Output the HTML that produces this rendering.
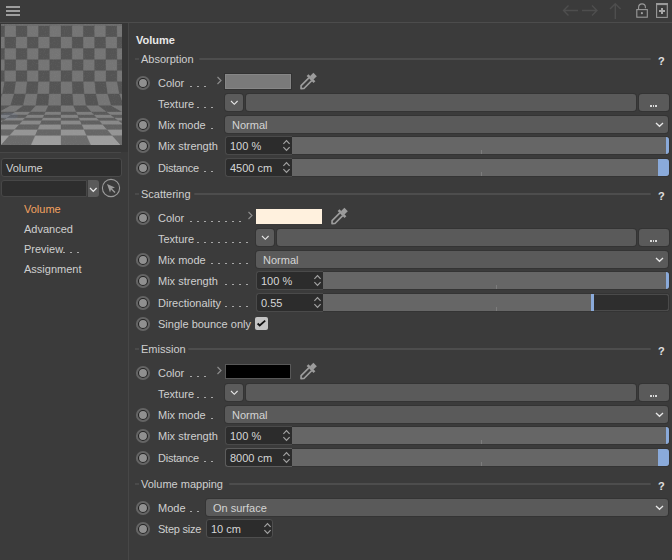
<!DOCTYPE html><html><head><meta charset="utf-8"><style>
html,body{margin:0;padding:0;width:672px;height:560px;overflow:hidden;background:#3b3b3b;}
.r{position:absolute;}
.t{position:absolute;font-family:"Liberation Sans",sans-serif;font-size:11px;line-height:13px;white-space:nowrap;}
svg.r{overflow:visible}
</style></head><body>
<div class="r" style="left:6px;top:6px;width:14px;height:2px;background:#9e9e9e;"></div>
<div class="r" style="left:6px;top:10px;width:14px;height:2px;background:#9e9e9e;"></div>
<div class="r" style="left:6px;top:14px;width:14px;height:2px;background:#9e9e9e;"></div>
<div class="r" style="left:0px;top:22px;width:672px;height:1px;background:#4c4c4c;"></div>
<svg class="r" style="left:560px;top:2px" width="112" height="18" viewBox="0 0 112 18"><g fill="none" stroke="#4e4e4e" stroke-width="1.4"><path d="M3.5 8.5 H18 M8.5 3.5 L3.5 8.5 L8.5 13.5"/><path d="M22 8.5 H37 M32 3.5 L37 8.5 L32 13.5"/><path d="M55.3 1.8 V17 M50 7 L55.3 1.8 L60.6 7"/></g><g fill="none" stroke="#9a9a9a" stroke-width="1.1"><path d="M78.6 7.3 V5.3 A3.4 3.4 0 0 1 85.4 5.3 V6.2"/><rect x="76.8" y="7.6" width="10.5" height="7.6"/><rect x="96.6" y="1.6" width="10.7" height="13.8"/></g><rect x="96.1" y="1.1" width="11.7" height="2" fill="#9a9a9a"/><circle cx="81.9" cy="11.2" r="1.1" fill="#a0a0a0"/><path d="M99 9.1 H105 M102 6.1 V12" stroke="#a8a8a8" stroke-width="2" fill="none"/></svg>
<div class="r" style="left:0px;top:23px;width:128px;height:129px;background:#363636;"></div>
<div class="r" style="left:128px;top:23px;width:1px;height:537px;background:#474747;"></div>
<svg class="r" style="left:0px;top:23px" width="122" height="123" viewBox="0 23 122 123"><defs><clipPath id="pc"><rect x="1" y="24" width="121" height="121"/></clipPath><filter id="nz" x="0" y="0" width="100%" height="100%"><feTurbulence type="fractalNoise" baseFrequency="0.9" numOctaves="1" seed="3"/><feColorMatrix type="matrix" values="0 0 0 0 0.5  0 0 0 0 0.5  0 0 0 0 0.5  1 0 0 0 -0.5"/></filter></defs><g clip-path="url(#pc)"><rect x="0" y="23" width="122" height="123" fill="#656565"/><path d="M-73.50 13.00L-62.29 13.00L-62.37 25.90L-73.59 25.90Z" fill="#6c6c6c" stroke="#6c6c6c" stroke-width="0.3"/><path d="M-62.29 13.00L-51.08 13.00L-51.16 25.90L-62.37 25.90Z" fill="#6c6c6c" stroke="#6c6c6c" stroke-width="0.3"/><path d="M-51.08 13.00L-39.87 13.00L-39.94 25.90L-51.16 25.90Z" fill="#6c6c6c" stroke="#6c6c6c" stroke-width="0.3"/><path d="M-39.87 13.00L-28.66 13.00L-28.73 25.90L-39.94 25.90Z" fill="#6c6c6c" stroke="#6c6c6c" stroke-width="0.3"/><path d="M-28.66 13.00L-17.46 13.00L-17.51 25.90L-28.73 25.90Z" fill="#6c6c6c" stroke="#6c6c6c" stroke-width="0.3"/><path d="M-17.46 13.00L-6.25 13.00L-6.29 25.90L-17.51 25.90Z" fill="#6c6c6c" stroke="#6c6c6c" stroke-width="0.3"/><path d="M-6.25 13.00L4.96 13.00L4.92 25.90L-6.29 25.90Z" fill="#6c6c6c" stroke="#6c6c6c" stroke-width="0.3"/><path d="M4.96 13.00L16.17 13.00L16.14 25.90L4.92 25.90Z" fill="#6c6c6c" stroke="#6c6c6c" stroke-width="0.3"/><path d="M16.17 13.00L27.38 13.00L27.35 25.90L16.14 25.90Z" fill="#6c6c6c" stroke="#6c6c6c" stroke-width="0.3"/><path d="M27.38 13.00L38.58 13.00L38.57 25.90L27.35 25.90Z" fill="#6c6c6c" stroke="#6c6c6c" stroke-width="0.3"/><path d="M38.58 13.00L49.79 13.00L49.78 25.90L38.57 25.90Z" fill="#6c6c6c" stroke="#6c6c6c" stroke-width="0.3"/><path d="M49.79 13.00L61.00 13.00L61.00 25.90L49.78 25.90Z" fill="#6c6c6c" stroke="#6c6c6c" stroke-width="0.3"/><path d="M61.00 13.00L72.21 13.00L72.22 25.90L61.00 25.90Z" fill="#6c6c6c" stroke="#6c6c6c" stroke-width="0.3"/><path d="M72.21 13.00L83.42 13.00L83.43 25.90L72.22 25.90Z" fill="#6c6c6c" stroke="#6c6c6c" stroke-width="0.3"/><path d="M83.42 13.00L94.62 13.00L94.65 25.90L83.43 25.90Z" fill="#6c6c6c" stroke="#6c6c6c" stroke-width="0.3"/><path d="M94.62 13.00L105.83 13.00L105.86 25.90L94.65 25.90Z" fill="#6c6c6c" stroke="#6c6c6c" stroke-width="0.3"/><path d="M105.83 13.00L117.04 13.00L117.08 25.90L105.86 25.90Z" fill="#6c6c6c" stroke="#6c6c6c" stroke-width="0.3"/><path d="M117.04 13.00L128.25 13.00L128.29 25.90L117.08 25.90Z" fill="#6c6c6c" stroke="#6c6c6c" stroke-width="0.3"/><path d="M128.25 13.00L139.46 13.00L139.51 25.90L128.29 25.90Z" fill="#6c6c6c" stroke="#6c6c6c" stroke-width="0.3"/><path d="M139.46 13.00L150.66 13.00L150.73 25.90L139.51 25.90Z" fill="#6c6c6c" stroke="#6c6c6c" stroke-width="0.3"/><path d="M150.66 13.00L161.87 13.00L161.94 25.90L150.73 25.90Z" fill="#6c6c6c" stroke="#6c6c6c" stroke-width="0.3"/><path d="M161.87 13.00L173.08 13.00L173.16 25.90L161.94 25.90Z" fill="#6c6c6c" stroke="#6c6c6c" stroke-width="0.3"/><path d="M173.08 13.00L184.29 13.00L184.37 25.90L173.16 25.90Z" fill="#6c6c6c" stroke="#6c6c6c" stroke-width="0.3"/><path d="M184.29 13.00L195.50 13.00L195.59 25.90L184.37 25.90Z" fill="#6c6c6c" stroke="#6c6c6c" stroke-width="0.3"/><path d="M-73.59 25.90L-62.37 25.90L-62.45 37.00L-73.67 37.00Z" fill="#545454" stroke="#545454" stroke-width="0.3"/><path d="M-62.37 25.90L-51.16 25.90L-51.23 37.00L-62.45 37.00Z" fill="#757575" stroke="#757575" stroke-width="0.3"/><path d="M-51.16 25.90L-39.94 25.90L-40.00 37.00L-51.23 37.00Z" fill="#545454" stroke="#545454" stroke-width="0.3"/><path d="M-39.94 25.90L-28.73 25.90L-28.78 37.00L-40.00 37.00Z" fill="#757575" stroke="#757575" stroke-width="0.3"/><path d="M-28.73 25.90L-17.51 25.90L-17.56 37.00L-28.78 37.00Z" fill="#545454" stroke="#545454" stroke-width="0.3"/><path d="M-17.51 25.90L-6.29 25.90L-6.34 37.00L-17.56 37.00Z" fill="#757575" stroke="#757575" stroke-width="0.3"/><path d="M-6.29 25.90L4.92 25.90L4.89 37.00L-6.34 37.00Z" fill="#545454" stroke="#545454" stroke-width="0.3"/><path d="M4.92 25.90L16.14 25.90L16.11 37.00L4.89 37.00Z" fill="#757575" stroke="#757575" stroke-width="0.3"/><path d="M16.14 25.90L27.35 25.90L27.33 37.00L16.11 37.00Z" fill="#545454" stroke="#545454" stroke-width="0.3"/><path d="M27.35 25.90L38.57 25.90L38.55 37.00L27.33 37.00Z" fill="#757575" stroke="#757575" stroke-width="0.3"/><path d="M38.57 25.90L49.78 25.90L49.78 37.00L38.55 37.00Z" fill="#545454" stroke="#545454" stroke-width="0.3"/><path d="M49.78 25.90L61.00 25.90L61.00 37.00L49.78 37.00Z" fill="#757575" stroke="#757575" stroke-width="0.3"/><path d="M61.00 25.90L72.22 25.90L72.22 37.00L61.00 37.00Z" fill="#545454" stroke="#545454" stroke-width="0.3"/><path d="M72.22 25.90L83.43 25.90L83.45 37.00L72.22 37.00Z" fill="#757575" stroke="#757575" stroke-width="0.3"/><path d="M83.43 25.90L94.65 25.90L94.67 37.00L83.45 37.00Z" fill="#545454" stroke="#545454" stroke-width="0.3"/><path d="M94.65 25.90L105.86 25.90L105.89 37.00L94.67 37.00Z" fill="#757575" stroke="#757575" stroke-width="0.3"/><path d="M105.86 25.90L117.08 25.90L117.11 37.00L105.89 37.00Z" fill="#545454" stroke="#545454" stroke-width="0.3"/><path d="M117.08 25.90L128.29 25.90L128.34 37.00L117.11 37.00Z" fill="#757575" stroke="#757575" stroke-width="0.3"/><path d="M128.29 25.90L139.51 25.90L139.56 37.00L128.34 37.00Z" fill="#545454" stroke="#545454" stroke-width="0.3"/><path d="M139.51 25.90L150.73 25.90L150.78 37.00L139.56 37.00Z" fill="#757575" stroke="#757575" stroke-width="0.3"/><path d="M150.73 25.90L161.94 25.90L162.00 37.00L150.78 37.00Z" fill="#545454" stroke="#545454" stroke-width="0.3"/><path d="M161.94 25.90L173.16 25.90L173.23 37.00L162.00 37.00Z" fill="#757575" stroke="#757575" stroke-width="0.3"/><path d="M173.16 25.90L184.37 25.90L184.45 37.00L173.23 37.00Z" fill="#545454" stroke="#545454" stroke-width="0.3"/><path d="M184.37 25.90L195.59 25.90L195.67 37.00L184.45 37.00Z" fill="#757575" stroke="#757575" stroke-width="0.3"/><path d="M-73.67 37.00L-62.45 37.00L-62.53 48.60L-73.76 48.60Z" fill="#757575" stroke="#757575" stroke-width="0.3"/><path d="M-62.45 37.00L-51.23 37.00L-51.30 48.60L-62.53 48.60Z" fill="#545454" stroke="#545454" stroke-width="0.3"/><path d="M-51.23 37.00L-40.00 37.00L-40.07 48.60L-51.30 48.60Z" fill="#757575" stroke="#757575" stroke-width="0.3"/><path d="M-40.00 37.00L-28.78 37.00L-28.84 48.60L-40.07 48.60Z" fill="#545454" stroke="#545454" stroke-width="0.3"/><path d="M-28.78 37.00L-17.56 37.00L-17.61 48.60L-28.84 48.60Z" fill="#757575" stroke="#757575" stroke-width="0.3"/><path d="M-17.56 37.00L-6.34 37.00L-6.38 48.60L-17.61 48.60Z" fill="#545454" stroke="#545454" stroke-width="0.3"/><path d="M-6.34 37.00L4.89 37.00L4.85 48.60L-6.38 48.60Z" fill="#757575" stroke="#757575" stroke-width="0.3"/><path d="M4.89 37.00L16.11 37.00L16.08 48.60L4.85 48.60Z" fill="#545454" stroke="#545454" stroke-width="0.3"/><path d="M16.11 37.00L27.33 37.00L27.31 48.60L16.08 48.60Z" fill="#757575" stroke="#757575" stroke-width="0.3"/><path d="M27.33 37.00L38.55 37.00L38.54 48.60L27.31 48.60Z" fill="#545454" stroke="#545454" stroke-width="0.3"/><path d="M38.55 37.00L49.78 37.00L49.77 48.60L38.54 48.60Z" fill="#757575" stroke="#757575" stroke-width="0.3"/><path d="M49.78 37.00L61.00 37.00L61.00 48.60L49.77 48.60Z" fill="#545454" stroke="#545454" stroke-width="0.3"/><path d="M61.00 37.00L72.22 37.00L72.23 48.60L61.00 48.60Z" fill="#757575" stroke="#757575" stroke-width="0.3"/><path d="M72.22 37.00L83.45 37.00L83.46 48.60L72.23 48.60Z" fill="#545454" stroke="#545454" stroke-width="0.3"/><path d="M83.45 37.00L94.67 37.00L94.69 48.60L83.46 48.60Z" fill="#757575" stroke="#757575" stroke-width="0.3"/><path d="M94.67 37.00L105.89 37.00L105.92 48.60L94.69 48.60Z" fill="#545454" stroke="#545454" stroke-width="0.3"/><path d="M105.89 37.00L117.11 37.00L117.15 48.60L105.92 48.60Z" fill="#757575" stroke="#757575" stroke-width="0.3"/><path d="M117.11 37.00L128.34 37.00L128.38 48.60L117.15 48.60Z" fill="#545454" stroke="#545454" stroke-width="0.3"/><path d="M128.34 37.00L139.56 37.00L139.61 48.60L128.38 48.60Z" fill="#757575" stroke="#757575" stroke-width="0.3"/><path d="M139.56 37.00L150.78 37.00L150.84 48.60L139.61 48.60Z" fill="#545454" stroke="#545454" stroke-width="0.3"/><path d="M150.78 37.00L162.00 37.00L162.07 48.60L150.84 48.60Z" fill="#757575" stroke="#757575" stroke-width="0.3"/><path d="M162.00 37.00L173.23 37.00L173.30 48.60L162.07 48.60Z" fill="#545454" stroke="#545454" stroke-width="0.3"/><path d="M173.23 37.00L184.45 37.00L184.53 48.60L173.30 48.60Z" fill="#757575" stroke="#757575" stroke-width="0.3"/><path d="M184.45 37.00L195.67 37.00L195.76 48.60L184.53 48.60Z" fill="#545454" stroke="#545454" stroke-width="0.3"/><path d="M-73.76 48.60L-62.53 48.60L-62.60 59.70L-73.84 59.70Z" fill="#545454" stroke="#545454" stroke-width="0.3"/><path d="M-62.53 48.60L-51.30 48.60L-51.36 59.70L-62.60 59.70Z" fill="#757575" stroke="#757575" stroke-width="0.3"/><path d="M-51.30 48.60L-40.07 48.60L-40.13 59.70L-51.36 59.70Z" fill="#545454" stroke="#545454" stroke-width="0.3"/><path d="M-40.07 48.60L-28.84 48.60L-28.89 59.70L-40.13 59.70Z" fill="#757575" stroke="#757575" stroke-width="0.3"/><path d="M-28.84 48.60L-17.61 48.60L-17.65 59.70L-28.89 59.70Z" fill="#545454" stroke="#545454" stroke-width="0.3"/><path d="M-17.61 48.60L-6.38 48.60L-6.42 59.70L-17.65 59.70Z" fill="#757575" stroke="#757575" stroke-width="0.3"/><path d="M-6.38 48.60L4.85 48.60L4.82 59.70L-6.42 59.70Z" fill="#545454" stroke="#545454" stroke-width="0.3"/><path d="M4.85 48.60L16.08 48.60L16.05 59.70L4.82 59.70Z" fill="#757575" stroke="#757575" stroke-width="0.3"/><path d="M16.08 48.60L27.31 48.60L27.29 59.70L16.05 59.70Z" fill="#545454" stroke="#545454" stroke-width="0.3"/><path d="M27.31 48.60L38.54 48.60L38.53 59.70L27.29 59.70Z" fill="#757575" stroke="#757575" stroke-width="0.3"/><path d="M38.54 48.60L49.77 48.60L49.76 59.70L38.53 59.70Z" fill="#545454" stroke="#545454" stroke-width="0.3"/><path d="M49.77 48.60L61.00 48.60L61.00 59.70L49.76 59.70Z" fill="#757575" stroke="#757575" stroke-width="0.3"/><path d="M61.00 48.60L72.23 48.60L72.24 59.70L61.00 59.70Z" fill="#545454" stroke="#545454" stroke-width="0.3"/><path d="M72.23 48.60L83.46 48.60L83.47 59.70L72.24 59.70Z" fill="#757575" stroke="#757575" stroke-width="0.3"/><path d="M83.46 48.60L94.69 48.60L94.71 59.70L83.47 59.70Z" fill="#545454" stroke="#545454" stroke-width="0.3"/><path d="M94.69 48.60L105.92 48.60L105.95 59.70L94.71 59.70Z" fill="#757575" stroke="#757575" stroke-width="0.3"/><path d="M105.92 48.60L117.15 48.60L117.18 59.70L105.95 59.70Z" fill="#545454" stroke="#545454" stroke-width="0.3"/><path d="M117.15 48.60L128.38 48.60L128.42 59.70L117.18 59.70Z" fill="#757575" stroke="#757575" stroke-width="0.3"/><path d="M128.38 48.60L139.61 48.60L139.65 59.70L128.42 59.70Z" fill="#545454" stroke="#545454" stroke-width="0.3"/><path d="M139.61 48.60L150.84 48.60L150.89 59.70L139.65 59.70Z" fill="#757575" stroke="#757575" stroke-width="0.3"/><path d="M150.84 48.60L162.07 48.60L162.13 59.70L150.89 59.70Z" fill="#545454" stroke="#545454" stroke-width="0.3"/><path d="M162.07 48.60L173.30 48.60L173.36 59.70L162.13 59.70Z" fill="#757575" stroke="#757575" stroke-width="0.3"/><path d="M173.30 48.60L184.53 48.60L184.60 59.70L173.36 59.70Z" fill="#545454" stroke="#545454" stroke-width="0.3"/><path d="M184.53 48.60L195.76 48.60L195.84 59.70L184.60 59.70Z" fill="#757575" stroke="#757575" stroke-width="0.3"/><path d="M-73.84 59.70L-62.60 59.70L-62.67 70.70L-73.92 70.70Z" fill="#757575" stroke="#757575" stroke-width="0.3"/><path d="M-62.60 59.70L-51.36 59.70L-51.43 70.70L-62.67 70.70Z" fill="#545454" stroke="#545454" stroke-width="0.3"/><path d="M-51.36 59.70L-40.13 59.70L-40.19 70.70L-51.43 70.70Z" fill="#757575" stroke="#757575" stroke-width="0.3"/><path d="M-40.13 59.70L-28.89 59.70L-28.94 70.70L-40.19 70.70Z" fill="#545454" stroke="#545454" stroke-width="0.3"/><path d="M-28.89 59.70L-17.65 59.70L-17.70 70.70L-28.94 70.70Z" fill="#757575" stroke="#757575" stroke-width="0.3"/><path d="M-17.65 59.70L-6.42 59.70L-6.46 70.70L-17.70 70.70Z" fill="#545454" stroke="#545454" stroke-width="0.3"/><path d="M-6.42 59.70L4.82 59.70L4.78 70.70L-6.46 70.70Z" fill="#757575" stroke="#757575" stroke-width="0.3"/><path d="M4.82 59.70L16.05 59.70L16.03 70.70L4.78 70.70Z" fill="#545454" stroke="#545454" stroke-width="0.3"/><path d="M16.05 59.70L27.29 59.70L27.27 70.70L16.03 70.70Z" fill="#757575" stroke="#757575" stroke-width="0.3"/><path d="M27.29 59.70L38.53 59.70L38.51 70.70L27.27 70.70Z" fill="#545454" stroke="#545454" stroke-width="0.3"/><path d="M38.53 59.70L49.76 59.70L49.76 70.70L38.51 70.70Z" fill="#757575" stroke="#757575" stroke-width="0.3"/><path d="M49.76 59.70L61.00 59.70L61.00 70.70L49.76 70.70Z" fill="#545454" stroke="#545454" stroke-width="0.3"/><path d="M61.00 59.70L72.24 59.70L72.24 70.70L61.00 70.70Z" fill="#757575" stroke="#757575" stroke-width="0.3"/><path d="M72.24 59.70L83.47 59.70L83.49 70.70L72.24 70.70Z" fill="#545454" stroke="#545454" stroke-width="0.3"/><path d="M83.47 59.70L94.71 59.70L94.73 70.70L83.49 70.70Z" fill="#757575" stroke="#757575" stroke-width="0.3"/><path d="M94.71 59.70L105.95 59.70L105.97 70.70L94.73 70.70Z" fill="#545454" stroke="#545454" stroke-width="0.3"/><path d="M105.95 59.70L117.18 59.70L117.22 70.70L105.97 70.70Z" fill="#757575" stroke="#757575" stroke-width="0.3"/><path d="M117.18 59.70L128.42 59.70L128.46 70.70L117.22 70.70Z" fill="#545454" stroke="#545454" stroke-width="0.3"/><path d="M128.42 59.70L139.65 59.70L139.70 70.70L128.46 70.70Z" fill="#757575" stroke="#757575" stroke-width="0.3"/><path d="M139.65 59.70L150.89 59.70L150.94 70.70L139.70 70.70Z" fill="#545454" stroke="#545454" stroke-width="0.3"/><path d="M150.89 59.70L162.13 59.70L162.19 70.70L150.94 70.70Z" fill="#757575" stroke="#757575" stroke-width="0.3"/><path d="M162.13 59.70L173.36 59.70L173.43 70.70L162.19 70.70Z" fill="#545454" stroke="#545454" stroke-width="0.3"/><path d="M173.36 59.70L184.60 59.70L184.67 70.70L173.43 70.70Z" fill="#757575" stroke="#757575" stroke-width="0.3"/><path d="M184.60 59.70L195.84 59.70L195.92 70.70L184.67 70.70Z" fill="#545454" stroke="#545454" stroke-width="0.3"/><path d="M-73.92 70.70L-62.67 70.70L-62.75 81.80L-74.00 81.80Z" fill="#545454" stroke="#545454" stroke-width="0.3"/><path d="M-62.67 70.70L-51.43 70.70L-51.50 81.80L-62.75 81.80Z" fill="#757575" stroke="#757575" stroke-width="0.3"/><path d="M-51.43 70.70L-40.19 70.70L-40.25 81.80L-51.50 81.80Z" fill="#545454" stroke="#545454" stroke-width="0.3"/><path d="M-40.19 70.70L-28.94 70.70L-29.00 81.80L-40.25 81.80Z" fill="#757575" stroke="#757575" stroke-width="0.3"/><path d="M-28.94 70.70L-17.70 70.70L-17.75 81.80L-29.00 81.80Z" fill="#545454" stroke="#545454" stroke-width="0.3"/><path d="M-17.70 70.70L-6.46 70.70L-6.50 81.80L-17.75 81.80Z" fill="#757575" stroke="#757575" stroke-width="0.3"/><path d="M-6.46 70.70L4.78 70.70L4.75 81.80L-6.50 81.80Z" fill="#545454" stroke="#545454" stroke-width="0.3"/><path d="M4.78 70.70L16.03 70.70L16.00 81.80L4.75 81.80Z" fill="#757575" stroke="#757575" stroke-width="0.3"/><path d="M16.03 70.70L27.27 70.70L27.25 81.80L16.00 81.80Z" fill="#545454" stroke="#545454" stroke-width="0.3"/><path d="M27.27 70.70L38.51 70.70L38.50 81.80L27.25 81.80Z" fill="#757575" stroke="#757575" stroke-width="0.3"/><path d="M38.51 70.70L49.76 70.70L49.75 81.80L38.50 81.80Z" fill="#545454" stroke="#545454" stroke-width="0.3"/><path d="M49.76 70.70L61.00 70.70L61.00 81.80L49.75 81.80Z" fill="#757575" stroke="#757575" stroke-width="0.3"/><path d="M61.00 70.70L72.24 70.70L72.25 81.80L61.00 81.80Z" fill="#545454" stroke="#545454" stroke-width="0.3"/><path d="M72.24 70.70L83.49 70.70L83.50 81.80L72.25 81.80Z" fill="#757575" stroke="#757575" stroke-width="0.3"/><path d="M83.49 70.70L94.73 70.70L94.75 81.80L83.50 81.80Z" fill="#545454" stroke="#545454" stroke-width="0.3"/><path d="M94.73 70.70L105.97 70.70L106.00 81.80L94.75 81.80Z" fill="#757575" stroke="#757575" stroke-width="0.3"/><path d="M105.97 70.70L117.22 70.70L117.25 81.80L106.00 81.80Z" fill="#545454" stroke="#545454" stroke-width="0.3"/><path d="M117.22 70.70L128.46 70.70L128.50 81.80L117.25 81.80Z" fill="#757575" stroke="#757575" stroke-width="0.3"/><path d="M128.46 70.70L139.70 70.70L139.75 81.80L128.50 81.80Z" fill="#545454" stroke="#545454" stroke-width="0.3"/><path d="M139.70 70.70L150.94 70.70L151.00 81.80L139.75 81.80Z" fill="#757575" stroke="#757575" stroke-width="0.3"/><path d="M150.94 70.70L162.19 70.70L162.25 81.80L151.00 81.80Z" fill="#545454" stroke="#545454" stroke-width="0.3"/><path d="M162.19 70.70L173.43 70.70L173.50 81.80L162.25 81.80Z" fill="#757575" stroke="#757575" stroke-width="0.3"/><path d="M173.43 70.70L184.67 70.70L184.75 81.80L173.50 81.80Z" fill="#545454" stroke="#545454" stroke-width="0.3"/><path d="M184.67 70.70L195.92 70.70L196.00 81.80L184.75 81.80Z" fill="#757575" stroke="#757575" stroke-width="0.3"/><path d="M-74.00 81.80L-62.75 81.80L-67.66 93.90L-79.35 93.90Z" fill="#757575" stroke="#757575" stroke-width="0.3"/><path d="M-62.75 81.80L-51.50 81.80L-55.96 93.90L-67.66 93.90Z" fill="#545454" stroke="#545454" stroke-width="0.3"/><path d="M-51.50 81.80L-40.25 81.80L-44.27 93.90L-55.96 93.90Z" fill="#757575" stroke="#757575" stroke-width="0.3"/><path d="M-40.25 81.80L-29.00 81.80L-32.57 93.90L-44.27 93.90Z" fill="#545454" stroke="#545454" stroke-width="0.3"/><path d="M-29.00 81.80L-17.75 81.80L-20.87 93.90L-32.57 93.90Z" fill="#757575" stroke="#757575" stroke-width="0.3"/><path d="M-17.75 81.80L-6.50 81.80L-9.18 93.90L-20.87 93.90Z" fill="#545454" stroke="#545454" stroke-width="0.3"/><path d="M-6.50 81.80L4.75 81.80L2.52 93.90L-9.18 93.90Z" fill="#757575" stroke="#757575" stroke-width="0.3"/><path d="M4.75 81.80L16.00 81.80L14.22 93.90L2.52 93.90Z" fill="#545454" stroke="#545454" stroke-width="0.3"/><path d="M16.00 81.80L27.25 81.80L25.91 93.90L14.22 93.90Z" fill="#757575" stroke="#757575" stroke-width="0.3"/><path d="M27.25 81.80L38.50 81.80L37.61 93.90L25.91 93.90Z" fill="#545454" stroke="#545454" stroke-width="0.3"/><path d="M38.50 81.80L49.75 81.80L49.30 93.90L37.61 93.90Z" fill="#757575" stroke="#757575" stroke-width="0.3"/><path d="M49.75 81.80L61.00 81.80L61.00 93.90L49.30 93.90Z" fill="#545454" stroke="#545454" stroke-width="0.3"/><path d="M61.00 81.80L72.25 81.80L72.70 93.90L61.00 93.90Z" fill="#757575" stroke="#757575" stroke-width="0.3"/><path d="M72.25 81.80L83.50 81.80L84.39 93.90L72.70 93.90Z" fill="#545454" stroke="#545454" stroke-width="0.3"/><path d="M83.50 81.80L94.75 81.80L96.09 93.90L84.39 93.90Z" fill="#757575" stroke="#757575" stroke-width="0.3"/><path d="M94.75 81.80L106.00 81.80L107.78 93.90L96.09 93.90Z" fill="#545454" stroke="#545454" stroke-width="0.3"/><path d="M106.00 81.80L117.25 81.80L119.48 93.90L107.78 93.90Z" fill="#757575" stroke="#757575" stroke-width="0.3"/><path d="M117.25 81.80L128.50 81.80L131.18 93.90L119.48 93.90Z" fill="#545454" stroke="#545454" stroke-width="0.3"/><path d="M128.50 81.80L139.75 81.80L142.87 93.90L131.18 93.90Z" fill="#757575" stroke="#757575" stroke-width="0.3"/><path d="M139.75 81.80L151.00 81.80L154.57 93.90L142.87 93.90Z" fill="#545454" stroke="#545454" stroke-width="0.3"/><path d="M151.00 81.80L162.25 81.80L166.27 93.90L154.57 93.90Z" fill="#757575" stroke="#757575" stroke-width="0.3"/><path d="M162.25 81.80L173.50 81.80L177.96 93.90L166.27 93.90Z" fill="#545454" stroke="#545454" stroke-width="0.3"/><path d="M173.50 81.80L184.75 81.80L189.66 93.90L177.96 93.90Z" fill="#757575" stroke="#757575" stroke-width="0.3"/><path d="M184.75 81.80L196.00 81.80L201.35 93.90L189.66 93.90Z" fill="#545454" stroke="#545454" stroke-width="0.3"/><path d="M-79.35 93.90L-67.66 93.90L-77.60 105.65L-90.20 105.65Z" fill="#545454" stroke="#545454" stroke-width="0.3"/><path d="M-67.66 93.90L-55.96 93.90L-65.00 105.65L-77.60 105.65Z" fill="#757575" stroke="#757575" stroke-width="0.3"/><path d="M-55.96 93.90L-44.27 93.90L-52.40 105.65L-65.00 105.65Z" fill="#545454" stroke="#545454" stroke-width="0.3"/><path d="M-44.27 93.90L-32.57 93.90L-39.80 105.65L-52.40 105.65Z" fill="#757575" stroke="#757575" stroke-width="0.3"/><path d="M-32.57 93.90L-20.87 93.90L-27.20 105.65L-39.80 105.65Z" fill="#545454" stroke="#545454" stroke-width="0.3"/><path d="M-20.87 93.90L-9.18 93.90L-14.60 105.65L-27.20 105.65Z" fill="#757575" stroke="#757575" stroke-width="0.3"/><path d="M-9.18 93.90L2.52 93.90L-2.00 105.65L-14.60 105.65Z" fill="#545454" stroke="#545454" stroke-width="0.3"/><path d="M2.52 93.90L14.22 93.90L10.60 105.65L-2.00 105.65Z" fill="#757575" stroke="#757575" stroke-width="0.3"/><path d="M14.22 93.90L25.91 93.90L23.20 105.65L10.60 105.65Z" fill="#545454" stroke="#545454" stroke-width="0.3"/><path d="M25.91 93.90L37.61 93.90L35.80 105.65L23.20 105.65Z" fill="#757575" stroke="#757575" stroke-width="0.3"/><path d="M37.61 93.90L49.30 93.90L48.40 105.65L35.80 105.65Z" fill="#545454" stroke="#545454" stroke-width="0.3"/><path d="M49.30 93.90L61.00 93.90L61.00 105.65L48.40 105.65Z" fill="#757575" stroke="#757575" stroke-width="0.3"/><path d="M61.00 93.90L72.70 93.90L73.60 105.65L61.00 105.65Z" fill="#545454" stroke="#545454" stroke-width="0.3"/><path d="M72.70 93.90L84.39 93.90L86.20 105.65L73.60 105.65Z" fill="#757575" stroke="#757575" stroke-width="0.3"/><path d="M84.39 93.90L96.09 93.90L98.80 105.65L86.20 105.65Z" fill="#545454" stroke="#545454" stroke-width="0.3"/><path d="M96.09 93.90L107.78 93.90L111.40 105.65L98.80 105.65Z" fill="#757575" stroke="#757575" stroke-width="0.3"/><path d="M107.78 93.90L119.48 93.90L124.00 105.65L111.40 105.65Z" fill="#545454" stroke="#545454" stroke-width="0.3"/><path d="M119.48 93.90L131.18 93.90L136.60 105.65L124.00 105.65Z" fill="#757575" stroke="#757575" stroke-width="0.3"/><path d="M131.18 93.90L142.87 93.90L149.20 105.65L136.60 105.65Z" fill="#545454" stroke="#545454" stroke-width="0.3"/><path d="M142.87 93.90L154.57 93.90L161.80 105.65L149.20 105.65Z" fill="#757575" stroke="#757575" stroke-width="0.3"/><path d="M154.57 93.90L166.27 93.90L174.40 105.65L161.80 105.65Z" fill="#545454" stroke="#545454" stroke-width="0.3"/><path d="M166.27 93.90L177.96 93.90L187.00 105.65L174.40 105.65Z" fill="#757575" stroke="#757575" stroke-width="0.3"/><path d="M177.96 93.90L189.66 93.90L199.60 105.65L187.00 105.65Z" fill="#545454" stroke="#545454" stroke-width="0.3"/><path d="M189.66 93.90L201.35 93.90L212.20 105.65L199.60 105.65Z" fill="#757575" stroke="#757575" stroke-width="0.3"/><path d="M-90.20 105.65L-77.60 105.65L-107.76 111.90L-123.10 111.90Z" fill="#797979" stroke="#797979" stroke-width="0.3"/><path d="M-77.60 105.65L-65.00 105.65L-92.42 111.90L-107.76 111.90Z" fill="#575757" stroke="#575757" stroke-width="0.3"/><path d="M-65.00 105.65L-52.40 105.65L-77.07 111.90L-92.42 111.90Z" fill="#797979" stroke="#797979" stroke-width="0.3"/><path d="M-52.40 105.65L-39.80 105.65L-61.73 111.90L-77.07 111.90Z" fill="#575757" stroke="#575757" stroke-width="0.3"/><path d="M-39.80 105.65L-27.20 105.65L-46.39 111.90L-61.73 111.90Z" fill="#797979" stroke="#797979" stroke-width="0.3"/><path d="M-27.20 105.65L-14.60 105.65L-31.05 111.90L-46.39 111.90Z" fill="#575757" stroke="#575757" stroke-width="0.3"/><path d="M-14.60 105.65L-2.00 105.65L-15.71 111.90L-31.05 111.90Z" fill="#797979" stroke="#797979" stroke-width="0.3"/><path d="M-2.00 105.65L10.60 105.65L-0.37 111.90L-15.71 111.90Z" fill="#575757" stroke="#575757" stroke-width="0.3"/><path d="M10.60 105.65L23.20 105.65L14.98 111.90L-0.37 111.90Z" fill="#797979" stroke="#797979" stroke-width="0.3"/><path d="M23.20 105.65L35.80 105.65L30.32 111.90L14.98 111.90Z" fill="#575757" stroke="#575757" stroke-width="0.3"/><path d="M35.80 105.65L48.40 105.65L45.66 111.90L30.32 111.90Z" fill="#797979" stroke="#797979" stroke-width="0.3"/><path d="M48.40 105.65L61.00 105.65L61.00 111.90L45.66 111.90Z" fill="#575757" stroke="#575757" stroke-width="0.3"/><path d="M61.00 105.65L73.60 105.65L76.34 111.90L61.00 111.90Z" fill="#797979" stroke="#797979" stroke-width="0.3"/><path d="M73.60 105.65L86.20 105.65L91.68 111.90L76.34 111.90Z" fill="#575757" stroke="#575757" stroke-width="0.3"/><path d="M86.20 105.65L98.80 105.65L107.02 111.90L91.68 111.90Z" fill="#797979" stroke="#797979" stroke-width="0.3"/><path d="M98.80 105.65L111.40 105.65L122.37 111.90L107.02 111.90Z" fill="#575757" stroke="#575757" stroke-width="0.3"/><path d="M111.40 105.65L124.00 105.65L137.71 111.90L122.37 111.90Z" fill="#797979" stroke="#797979" stroke-width="0.3"/><path d="M124.00 105.65L136.60 105.65L153.05 111.90L137.71 111.90Z" fill="#575757" stroke="#575757" stroke-width="0.3"/><path d="M136.60 105.65L149.20 105.65L168.39 111.90L153.05 111.90Z" fill="#797979" stroke="#797979" stroke-width="0.3"/><path d="M149.20 105.65L161.80 105.65L183.73 111.90L168.39 111.90Z" fill="#575757" stroke="#575757" stroke-width="0.3"/><path d="M161.80 105.65L174.40 105.65L199.07 111.90L183.73 111.90Z" fill="#797979" stroke="#797979" stroke-width="0.3"/><path d="M174.40 105.65L187.00 105.65L214.42 111.90L199.07 111.90Z" fill="#575757" stroke="#575757" stroke-width="0.3"/><path d="M187.00 105.65L199.60 105.65L229.76 111.90L214.42 111.90Z" fill="#797979" stroke="#797979" stroke-width="0.3"/><path d="M199.60 105.65L212.20 105.65L245.10 111.90L229.76 111.90Z" fill="#575757" stroke="#575757" stroke-width="0.3"/><path d="M-123.10 111.90L-107.76 111.90L-122.23 114.90L-138.89 114.90Z" fill="#5a5a5a" stroke="#5a5a5a" stroke-width="0.3"/><path d="M-107.76 111.90L-92.42 111.90L-105.58 114.90L-122.23 114.90Z" fill="#7f7f7f" stroke="#7f7f7f" stroke-width="0.3"/><path d="M-92.42 111.90L-77.07 111.90L-88.92 114.90L-105.58 114.90Z" fill="#5a5a5a" stroke="#5a5a5a" stroke-width="0.3"/><path d="M-77.07 111.90L-61.73 111.90L-72.26 114.90L-88.92 114.90Z" fill="#7f7f7f" stroke="#7f7f7f" stroke-width="0.3"/><path d="M-61.73 111.90L-46.39 111.90L-55.60 114.90L-72.26 114.90Z" fill="#5a5a5a" stroke="#5a5a5a" stroke-width="0.3"/><path d="M-46.39 111.90L-31.05 111.90L-38.95 114.90L-55.60 114.90Z" fill="#7f7f7f" stroke="#7f7f7f" stroke-width="0.3"/><path d="M-31.05 111.90L-15.71 111.90L-22.29 114.90L-38.95 114.90Z" fill="#5a5a5a" stroke="#5a5a5a" stroke-width="0.3"/><path d="M-15.71 111.90L-0.37 111.90L-5.63 114.90L-22.29 114.90Z" fill="#7f7f7f" stroke="#7f7f7f" stroke-width="0.3"/><path d="M-0.37 111.90L14.98 111.90L11.03 114.90L-5.63 114.90Z" fill="#5a5a5a" stroke="#5a5a5a" stroke-width="0.3"/><path d="M14.98 111.90L30.32 111.90L27.68 114.90L11.03 114.90Z" fill="#7f7f7f" stroke="#7f7f7f" stroke-width="0.3"/><path d="M30.32 111.90L45.66 111.90L44.34 114.90L27.68 114.90Z" fill="#5a5a5a" stroke="#5a5a5a" stroke-width="0.3"/><path d="M45.66 111.90L61.00 111.90L61.00 114.90L44.34 114.90Z" fill="#7f7f7f" stroke="#7f7f7f" stroke-width="0.3"/><path d="M61.00 111.90L76.34 111.90L77.66 114.90L61.00 114.90Z" fill="#5a5a5a" stroke="#5a5a5a" stroke-width="0.3"/><path d="M76.34 111.90L91.68 111.90L94.32 114.90L77.66 114.90Z" fill="#7f7f7f" stroke="#7f7f7f" stroke-width="0.3"/><path d="M91.68 111.90L107.02 111.90L110.97 114.90L94.32 114.90Z" fill="#5a5a5a" stroke="#5a5a5a" stroke-width="0.3"/><path d="M107.02 111.90L122.37 111.90L127.63 114.90L110.97 114.90Z" fill="#7f7f7f" stroke="#7f7f7f" stroke-width="0.3"/><path d="M122.37 111.90L137.71 111.90L144.29 114.90L127.63 114.90Z" fill="#5a5a5a" stroke="#5a5a5a" stroke-width="0.3"/><path d="M137.71 111.90L153.05 111.90L160.95 114.90L144.29 114.90Z" fill="#7f7f7f" stroke="#7f7f7f" stroke-width="0.3"/><path d="M153.05 111.90L168.39 111.90L177.60 114.90L160.95 114.90Z" fill="#5a5a5a" stroke="#5a5a5a" stroke-width="0.3"/><path d="M168.39 111.90L183.73 111.90L194.26 114.90L177.60 114.90Z" fill="#7f7f7f" stroke="#7f7f7f" stroke-width="0.3"/><path d="M183.73 111.90L199.07 111.90L210.92 114.90L194.26 114.90Z" fill="#5a5a5a" stroke="#5a5a5a" stroke-width="0.3"/><path d="M199.07 111.90L214.42 111.90L227.58 114.90L210.92 114.90Z" fill="#7f7f7f" stroke="#7f7f7f" stroke-width="0.3"/><path d="M214.42 111.90L229.76 111.90L244.23 114.90L227.58 114.90Z" fill="#5a5a5a" stroke="#5a5a5a" stroke-width="0.3"/><path d="M229.76 111.90L245.10 111.90L260.89 114.90L244.23 114.90Z" fill="#7f7f7f" stroke="#7f7f7f" stroke-width="0.3"/><path d="M-138.89 114.90L-122.23 114.90L-136.71 117.90L-154.68 117.90Z" fill="#828282" stroke="#828282" stroke-width="0.3"/><path d="M-122.23 114.90L-105.58 114.90L-118.74 117.90L-136.71 117.90Z" fill="#5c5c5c" stroke="#5c5c5c" stroke-width="0.3"/><path d="M-105.58 114.90L-88.92 114.90L-100.76 117.90L-118.74 117.90Z" fill="#828282" stroke="#828282" stroke-width="0.3"/><path d="M-88.92 114.90L-72.26 114.90L-82.79 117.90L-100.76 117.90Z" fill="#5c5c5c" stroke="#5c5c5c" stroke-width="0.3"/><path d="M-72.26 114.90L-55.60 114.90L-64.82 117.90L-82.79 117.90Z" fill="#828282" stroke="#828282" stroke-width="0.3"/><path d="M-55.60 114.90L-38.95 114.90L-46.84 117.90L-64.82 117.90Z" fill="#5c5c5c" stroke="#5c5c5c" stroke-width="0.3"/><path d="M-38.95 114.90L-22.29 114.90L-28.87 117.90L-46.84 117.90Z" fill="#828282" stroke="#828282" stroke-width="0.3"/><path d="M-22.29 114.90L-5.63 114.90L-10.89 117.90L-28.87 117.90Z" fill="#5c5c5c" stroke="#5c5c5c" stroke-width="0.3"/><path d="M-5.63 114.90L11.03 114.90L7.08 117.90L-10.89 117.90Z" fill="#828282" stroke="#828282" stroke-width="0.3"/><path d="M11.03 114.90L27.68 114.90L25.05 117.90L7.08 117.90Z" fill="#5c5c5c" stroke="#5c5c5c" stroke-width="0.3"/><path d="M27.68 114.90L44.34 114.90L43.03 117.90L25.05 117.90Z" fill="#828282" stroke="#828282" stroke-width="0.3"/><path d="M44.34 114.90L61.00 114.90L61.00 117.90L43.03 117.90Z" fill="#5c5c5c" stroke="#5c5c5c" stroke-width="0.3"/><path d="M61.00 114.90L77.66 114.90L78.97 117.90L61.00 117.90Z" fill="#828282" stroke="#828282" stroke-width="0.3"/><path d="M77.66 114.90L94.32 114.90L96.95 117.90L78.97 117.90Z" fill="#5c5c5c" stroke="#5c5c5c" stroke-width="0.3"/><path d="M94.32 114.90L110.97 114.90L114.92 117.90L96.95 117.90Z" fill="#828282" stroke="#828282" stroke-width="0.3"/><path d="M110.97 114.90L127.63 114.90L132.89 117.90L114.92 117.90Z" fill="#5c5c5c" stroke="#5c5c5c" stroke-width="0.3"/><path d="M127.63 114.90L144.29 114.90L150.87 117.90L132.89 117.90Z" fill="#828282" stroke="#828282" stroke-width="0.3"/><path d="M144.29 114.90L160.95 114.90L168.84 117.90L150.87 117.90Z" fill="#5c5c5c" stroke="#5c5c5c" stroke-width="0.3"/><path d="M160.95 114.90L177.60 114.90L186.82 117.90L168.84 117.90Z" fill="#828282" stroke="#828282" stroke-width="0.3"/><path d="M177.60 114.90L194.26 114.90L204.79 117.90L186.82 117.90Z" fill="#5c5c5c" stroke="#5c5c5c" stroke-width="0.3"/><path d="M194.26 114.90L210.92 114.90L222.76 117.90L204.79 117.90Z" fill="#828282" stroke="#828282" stroke-width="0.3"/><path d="M210.92 114.90L227.58 114.90L240.74 117.90L222.76 117.90Z" fill="#5c5c5c" stroke="#5c5c5c" stroke-width="0.3"/><path d="M227.58 114.90L244.23 114.90L258.71 117.90L240.74 117.90Z" fill="#828282" stroke="#828282" stroke-width="0.3"/><path d="M244.23 114.90L260.89 114.90L276.68 117.90L258.71 117.90Z" fill="#5c5c5c" stroke="#5c5c5c" stroke-width="0.3"/><path d="M-154.68 117.90L-136.71 117.90L-150.70 120.80L-169.95 120.80Z" fill="#5e5e5e" stroke="#5e5e5e" stroke-width="0.3"/><path d="M-136.71 117.90L-118.74 117.90L-131.46 120.80L-150.70 120.80Z" fill="#868686" stroke="#868686" stroke-width="0.3"/><path d="M-118.74 117.90L-100.76 117.90L-112.21 120.80L-131.46 120.80Z" fill="#5e5e5e" stroke="#5e5e5e" stroke-width="0.3"/><path d="M-100.76 117.90L-82.79 117.90L-92.97 120.80L-112.21 120.80Z" fill="#868686" stroke="#868686" stroke-width="0.3"/><path d="M-82.79 117.90L-64.82 117.90L-73.72 120.80L-92.97 120.80Z" fill="#5e5e5e" stroke="#5e5e5e" stroke-width="0.3"/><path d="M-64.82 117.90L-46.84 117.90L-54.47 120.80L-73.72 120.80Z" fill="#868686" stroke="#868686" stroke-width="0.3"/><path d="M-46.84 117.90L-28.87 117.90L-35.23 120.80L-54.47 120.80Z" fill="#5e5e5e" stroke="#5e5e5e" stroke-width="0.3"/><path d="M-28.87 117.90L-10.89 117.90L-15.98 120.80L-35.23 120.80Z" fill="#868686" stroke="#868686" stroke-width="0.3"/><path d="M-10.89 117.90L7.08 117.90L3.26 120.80L-15.98 120.80Z" fill="#5e5e5e" stroke="#5e5e5e" stroke-width="0.3"/><path d="M7.08 117.90L25.05 117.90L22.51 120.80L3.26 120.80Z" fill="#868686" stroke="#868686" stroke-width="0.3"/><path d="M25.05 117.90L43.03 117.90L41.75 120.80L22.51 120.80Z" fill="#5e5e5e" stroke="#5e5e5e" stroke-width="0.3"/><path d="M43.03 117.90L61.00 117.90L61.00 120.80L41.75 120.80Z" fill="#868686" stroke="#868686" stroke-width="0.3"/><path d="M61.00 117.90L78.97 117.90L80.25 120.80L61.00 120.80Z" fill="#5e5e5e" stroke="#5e5e5e" stroke-width="0.3"/><path d="M78.97 117.90L96.95 117.90L99.49 120.80L80.25 120.80Z" fill="#868686" stroke="#868686" stroke-width="0.3"/><path d="M96.95 117.90L114.92 117.90L118.74 120.80L99.49 120.80Z" fill="#5e5e5e" stroke="#5e5e5e" stroke-width="0.3"/><path d="M114.92 117.90L132.89 117.90L137.98 120.80L118.74 120.80Z" fill="#868686" stroke="#868686" stroke-width="0.3"/><path d="M132.89 117.90L150.87 117.90L157.23 120.80L137.98 120.80Z" fill="#5e5e5e" stroke="#5e5e5e" stroke-width="0.3"/><path d="M150.87 117.90L168.84 117.90L176.47 120.80L157.23 120.80Z" fill="#868686" stroke="#868686" stroke-width="0.3"/><path d="M168.84 117.90L186.82 117.90L195.72 120.80L176.47 120.80Z" fill="#5e5e5e" stroke="#5e5e5e" stroke-width="0.3"/><path d="M186.82 117.90L204.79 117.90L214.97 120.80L195.72 120.80Z" fill="#868686" stroke="#868686" stroke-width="0.3"/><path d="M204.79 117.90L222.76 117.90L234.21 120.80L214.97 120.80Z" fill="#5e5e5e" stroke="#5e5e5e" stroke-width="0.3"/><path d="M222.76 117.90L240.74 117.90L253.46 120.80L234.21 120.80Z" fill="#868686" stroke="#868686" stroke-width="0.3"/><path d="M240.74 117.90L258.71 117.90L272.70 120.80L253.46 120.80Z" fill="#5e5e5e" stroke="#5e5e5e" stroke-width="0.3"/><path d="M258.71 117.90L276.68 117.90L291.95 120.80L272.70 120.80Z" fill="#868686" stroke="#868686" stroke-width="0.3"/><path d="M-169.95 120.80L-150.70 120.80L-169.52 124.70L-190.48 124.70Z" fill="#898989" stroke="#898989" stroke-width="0.3"/><path d="M-150.70 120.80L-131.46 120.80L-148.57 124.70L-169.52 124.70Z" fill="#606060" stroke="#606060" stroke-width="0.3"/><path d="M-131.46 120.80L-112.21 120.80L-127.61 124.70L-148.57 124.70Z" fill="#898989" stroke="#898989" stroke-width="0.3"/><path d="M-112.21 120.80L-92.97 120.80L-106.65 124.70L-127.61 124.70Z" fill="#606060" stroke="#606060" stroke-width="0.3"/><path d="M-92.97 120.80L-73.72 120.80L-85.70 124.70L-106.65 124.70Z" fill="#898989" stroke="#898989" stroke-width="0.3"/><path d="M-73.72 120.80L-54.47 120.80L-64.74 124.70L-85.70 124.70Z" fill="#606060" stroke="#606060" stroke-width="0.3"/><path d="M-54.47 120.80L-35.23 120.80L-43.78 124.70L-64.74 124.70Z" fill="#898989" stroke="#898989" stroke-width="0.3"/><path d="M-35.23 120.80L-15.98 120.80L-22.83 124.70L-43.78 124.70Z" fill="#606060" stroke="#606060" stroke-width="0.3"/><path d="M-15.98 120.80L3.26 120.80L-1.87 124.70L-22.83 124.70Z" fill="#898989" stroke="#898989" stroke-width="0.3"/><path d="M3.26 120.80L22.51 120.80L19.09 124.70L-1.87 124.70Z" fill="#606060" stroke="#606060" stroke-width="0.3"/><path d="M22.51 120.80L41.75 120.80L40.04 124.70L19.09 124.70Z" fill="#898989" stroke="#898989" stroke-width="0.3"/><path d="M41.75 120.80L61.00 120.80L61.00 124.70L40.04 124.70Z" fill="#606060" stroke="#606060" stroke-width="0.3"/><path d="M61.00 120.80L80.25 120.80L81.96 124.70L61.00 124.70Z" fill="#898989" stroke="#898989" stroke-width="0.3"/><path d="M80.25 120.80L99.49 120.80L102.91 124.70L81.96 124.70Z" fill="#606060" stroke="#606060" stroke-width="0.3"/><path d="M99.49 120.80L118.74 120.80L123.87 124.70L102.91 124.70Z" fill="#898989" stroke="#898989" stroke-width="0.3"/><path d="M118.74 120.80L137.98 120.80L144.83 124.70L123.87 124.70Z" fill="#606060" stroke="#606060" stroke-width="0.3"/><path d="M137.98 120.80L157.23 120.80L165.78 124.70L144.83 124.70Z" fill="#898989" stroke="#898989" stroke-width="0.3"/><path d="M157.23 120.80L176.47 120.80L186.74 124.70L165.78 124.70Z" fill="#606060" stroke="#606060" stroke-width="0.3"/><path d="M176.47 120.80L195.72 120.80L207.70 124.70L186.74 124.70Z" fill="#898989" stroke="#898989" stroke-width="0.3"/><path d="M195.72 120.80L214.97 120.80L228.65 124.70L207.70 124.70Z" fill="#606060" stroke="#606060" stroke-width="0.3"/><path d="M214.97 120.80L234.21 120.80L249.61 124.70L228.65 124.70Z" fill="#898989" stroke="#898989" stroke-width="0.3"/><path d="M234.21 120.80L253.46 120.80L270.57 124.70L249.61 124.70Z" fill="#606060" stroke="#606060" stroke-width="0.3"/><path d="M253.46 120.80L272.70 120.80L291.52 124.70L270.57 124.70Z" fill="#898989" stroke="#898989" stroke-width="0.3"/><path d="M272.70 120.80L291.95 120.80L312.48 124.70L291.52 124.70Z" fill="#606060" stroke="#606060" stroke-width="0.3"/><path d="M-190.48 124.70L-169.52 124.70L-194.13 129.80L-217.32 129.80Z" fill="#636363" stroke="#636363" stroke-width="0.3"/><path d="M-169.52 124.70L-148.57 124.70L-170.94 129.80L-194.13 129.80Z" fill="#8f8f8f" stroke="#8f8f8f" stroke-width="0.3"/><path d="M-148.57 124.70L-127.61 124.70L-147.74 129.80L-170.94 129.80Z" fill="#636363" stroke="#636363" stroke-width="0.3"/><path d="M-127.61 124.70L-106.65 124.70L-124.55 129.80L-147.74 129.80Z" fill="#8f8f8f" stroke="#8f8f8f" stroke-width="0.3"/><path d="M-106.65 124.70L-85.70 124.70L-101.36 129.80L-124.55 129.80Z" fill="#636363" stroke="#636363" stroke-width="0.3"/><path d="M-85.70 124.70L-64.74 124.70L-78.16 129.80L-101.36 129.80Z" fill="#8f8f8f" stroke="#8f8f8f" stroke-width="0.3"/><path d="M-64.74 124.70L-43.78 124.70L-54.97 129.80L-78.16 129.80Z" fill="#636363" stroke="#636363" stroke-width="0.3"/><path d="M-43.78 124.70L-22.83 124.70L-31.77 129.80L-54.97 129.80Z" fill="#8f8f8f" stroke="#8f8f8f" stroke-width="0.3"/><path d="M-22.83 124.70L-1.87 124.70L-8.58 129.80L-31.77 129.80Z" fill="#636363" stroke="#636363" stroke-width="0.3"/><path d="M-1.87 124.70L19.09 124.70L14.61 129.80L-8.58 129.80Z" fill="#8f8f8f" stroke="#8f8f8f" stroke-width="0.3"/><path d="M19.09 124.70L40.04 124.70L37.81 129.80L14.61 129.80Z" fill="#636363" stroke="#636363" stroke-width="0.3"/><path d="M40.04 124.70L61.00 124.70L61.00 129.80L37.81 129.80Z" fill="#8f8f8f" stroke="#8f8f8f" stroke-width="0.3"/><path d="M61.00 124.70L81.96 124.70L84.19 129.80L61.00 129.80Z" fill="#636363" stroke="#636363" stroke-width="0.3"/><path d="M81.96 124.70L102.91 124.70L107.39 129.80L84.19 129.80Z" fill="#8f8f8f" stroke="#8f8f8f" stroke-width="0.3"/><path d="M102.91 124.70L123.87 124.70L130.58 129.80L107.39 129.80Z" fill="#636363" stroke="#636363" stroke-width="0.3"/><path d="M123.87 124.70L144.83 124.70L153.77 129.80L130.58 129.80Z" fill="#8f8f8f" stroke="#8f8f8f" stroke-width="0.3"/><path d="M144.83 124.70L165.78 124.70L176.97 129.80L153.77 129.80Z" fill="#636363" stroke="#636363" stroke-width="0.3"/><path d="M165.78 124.70L186.74 124.70L200.16 129.80L176.97 129.80Z" fill="#8f8f8f" stroke="#8f8f8f" stroke-width="0.3"/><path d="M186.74 124.70L207.70 124.70L223.36 129.80L200.16 129.80Z" fill="#636363" stroke="#636363" stroke-width="0.3"/><path d="M207.70 124.70L228.65 124.70L246.55 129.80L223.36 129.80Z" fill="#8f8f8f" stroke="#8f8f8f" stroke-width="0.3"/><path d="M228.65 124.70L249.61 124.70L269.74 129.80L246.55 129.80Z" fill="#636363" stroke="#636363" stroke-width="0.3"/><path d="M249.61 124.70L270.57 124.70L292.94 129.80L269.74 129.80Z" fill="#8f8f8f" stroke="#8f8f8f" stroke-width="0.3"/><path d="M270.57 124.70L291.52 124.70L316.13 129.80L292.94 129.80Z" fill="#636363" stroke="#636363" stroke-width="0.3"/><path d="M291.52 124.70L312.48 124.70L339.32 129.80L316.13 129.80Z" fill="#8f8f8f" stroke="#8f8f8f" stroke-width="0.3"/><path d="M-217.32 129.80L-194.13 129.80L-222.60 135.70L-248.38 135.70Z" fill="#959595" stroke="#959595" stroke-width="0.3"/><path d="M-194.13 129.80L-170.94 129.80L-196.82 135.70L-222.60 135.70Z" fill="#666666" stroke="#666666" stroke-width="0.3"/><path d="M-170.94 129.80L-147.74 129.80L-171.04 135.70L-196.82 135.70Z" fill="#959595" stroke="#959595" stroke-width="0.3"/><path d="M-147.74 129.80L-124.55 129.80L-145.25 135.70L-171.04 135.70Z" fill="#666666" stroke="#666666" stroke-width="0.3"/><path d="M-124.55 129.80L-101.36 129.80L-119.47 135.70L-145.25 135.70Z" fill="#959595" stroke="#959595" stroke-width="0.3"/><path d="M-101.36 129.80L-78.16 129.80L-93.69 135.70L-119.47 135.70Z" fill="#666666" stroke="#666666" stroke-width="0.3"/><path d="M-78.16 129.80L-54.97 129.80L-67.91 135.70L-93.69 135.70Z" fill="#959595" stroke="#959595" stroke-width="0.3"/><path d="M-54.97 129.80L-31.77 129.80L-42.13 135.70L-67.91 135.70Z" fill="#666666" stroke="#666666" stroke-width="0.3"/><path d="M-31.77 129.80L-8.58 129.80L-16.35 135.70L-42.13 135.70Z" fill="#959595" stroke="#959595" stroke-width="0.3"/><path d="M-8.58 129.80L14.61 129.80L9.44 135.70L-16.35 135.70Z" fill="#666666" stroke="#666666" stroke-width="0.3"/><path d="M14.61 129.80L37.81 129.80L35.22 135.70L9.44 135.70Z" fill="#959595" stroke="#959595" stroke-width="0.3"/><path d="M37.81 129.80L61.00 129.80L61.00 135.70L35.22 135.70Z" fill="#666666" stroke="#666666" stroke-width="0.3"/><path d="M61.00 129.80L84.19 129.80L86.78 135.70L61.00 135.70Z" fill="#959595" stroke="#959595" stroke-width="0.3"/><path d="M84.19 129.80L107.39 129.80L112.56 135.70L86.78 135.70Z" fill="#666666" stroke="#666666" stroke-width="0.3"/><path d="M107.39 129.80L130.58 129.80L138.35 135.70L112.56 135.70Z" fill="#959595" stroke="#959595" stroke-width="0.3"/><path d="M130.58 129.80L153.77 129.80L164.13 135.70L138.35 135.70Z" fill="#666666" stroke="#666666" stroke-width="0.3"/><path d="M153.77 129.80L176.97 129.80L189.91 135.70L164.13 135.70Z" fill="#959595" stroke="#959595" stroke-width="0.3"/><path d="M176.97 129.80L200.16 129.80L215.69 135.70L189.91 135.70Z" fill="#666666" stroke="#666666" stroke-width="0.3"/><path d="M200.16 129.80L223.36 129.80L241.47 135.70L215.69 135.70Z" fill="#959595" stroke="#959595" stroke-width="0.3"/><path d="M223.36 129.80L246.55 129.80L267.25 135.70L241.47 135.70Z" fill="#666666" stroke="#666666" stroke-width="0.3"/><path d="M246.55 129.80L269.74 129.80L293.04 135.70L267.25 135.70Z" fill="#959595" stroke="#959595" stroke-width="0.3"/><path d="M269.74 129.80L292.94 129.80L318.82 135.70L293.04 135.70Z" fill="#666666" stroke="#666666" stroke-width="0.3"/><path d="M292.94 129.80L316.13 129.80L344.60 135.70L318.82 135.70Z" fill="#959595" stroke="#959595" stroke-width="0.3"/><path d="M316.13 129.80L339.32 129.80L370.38 135.70L344.60 135.70Z" fill="#666666" stroke="#666666" stroke-width="0.3"/><path d="M-248.38 135.70L-222.60 135.70L-272.30 146.00L-302.60 146.00Z" fill="#6c6c6c" stroke="#6c6c6c" stroke-width="0.3"/><path d="M-222.60 135.70L-196.82 135.70L-242.00 146.00L-272.30 146.00Z" fill="#9e9e9e" stroke="#9e9e9e" stroke-width="0.3"/><path d="M-196.82 135.70L-171.04 135.70L-211.70 146.00L-242.00 146.00Z" fill="#6c6c6c" stroke="#6c6c6c" stroke-width="0.3"/><path d="M-171.04 135.70L-145.25 135.70L-181.40 146.00L-211.70 146.00Z" fill="#9e9e9e" stroke="#9e9e9e" stroke-width="0.3"/><path d="M-145.25 135.70L-119.47 135.70L-151.10 146.00L-181.40 146.00Z" fill="#6c6c6c" stroke="#6c6c6c" stroke-width="0.3"/><path d="M-119.47 135.70L-93.69 135.70L-120.80 146.00L-151.10 146.00Z" fill="#9e9e9e" stroke="#9e9e9e" stroke-width="0.3"/><path d="M-93.69 135.70L-67.91 135.70L-90.50 146.00L-120.80 146.00Z" fill="#6c6c6c" stroke="#6c6c6c" stroke-width="0.3"/><path d="M-67.91 135.70L-42.13 135.70L-60.20 146.00L-90.50 146.00Z" fill="#9e9e9e" stroke="#9e9e9e" stroke-width="0.3"/><path d="M-42.13 135.70L-16.35 135.70L-29.90 146.00L-60.20 146.00Z" fill="#6c6c6c" stroke="#6c6c6c" stroke-width="0.3"/><path d="M-16.35 135.70L9.44 135.70L0.40 146.00L-29.90 146.00Z" fill="#9e9e9e" stroke="#9e9e9e" stroke-width="0.3"/><path d="M9.44 135.70L35.22 135.70L30.70 146.00L0.40 146.00Z" fill="#6c6c6c" stroke="#6c6c6c" stroke-width="0.3"/><path d="M35.22 135.70L61.00 135.70L61.00 146.00L30.70 146.00Z" fill="#9e9e9e" stroke="#9e9e9e" stroke-width="0.3"/><path d="M61.00 135.70L86.78 135.70L91.30 146.00L61.00 146.00Z" fill="#6c6c6c" stroke="#6c6c6c" stroke-width="0.3"/><path d="M86.78 135.70L112.56 135.70L121.60 146.00L91.30 146.00Z" fill="#9e9e9e" stroke="#9e9e9e" stroke-width="0.3"/><path d="M112.56 135.70L138.35 135.70L151.90 146.00L121.60 146.00Z" fill="#6c6c6c" stroke="#6c6c6c" stroke-width="0.3"/><path d="M138.35 135.70L164.13 135.70L182.20 146.00L151.90 146.00Z" fill="#9e9e9e" stroke="#9e9e9e" stroke-width="0.3"/><path d="M164.13 135.70L189.91 135.70L212.50 146.00L182.20 146.00Z" fill="#6c6c6c" stroke="#6c6c6c" stroke-width="0.3"/><path d="M189.91 135.70L215.69 135.70L242.80 146.00L212.50 146.00Z" fill="#9e9e9e" stroke="#9e9e9e" stroke-width="0.3"/><path d="M215.69 135.70L241.47 135.70L273.10 146.00L242.80 146.00Z" fill="#6c6c6c" stroke="#6c6c6c" stroke-width="0.3"/><path d="M241.47 135.70L267.25 135.70L303.40 146.00L273.10 146.00Z" fill="#9e9e9e" stroke="#9e9e9e" stroke-width="0.3"/><path d="M267.25 135.70L293.04 135.70L333.70 146.00L303.40 146.00Z" fill="#6c6c6c" stroke="#6c6c6c" stroke-width="0.3"/><path d="M293.04 135.70L318.82 135.70L364.00 146.00L333.70 146.00Z" fill="#9e9e9e" stroke="#9e9e9e" stroke-width="0.3"/><path d="M318.82 135.70L344.60 135.70L394.30 146.00L364.00 146.00Z" fill="#6c6c6c" stroke="#6c6c6c" stroke-width="0.3"/><path d="M344.60 135.70L370.38 135.70L424.60 146.00L394.30 146.00Z" fill="#9e9e9e" stroke="#9e9e9e" stroke-width="0.3"/><ellipse cx="9" cy="116" rx="9" ry="3.5" fill="#6a7a9a" opacity="0.18"/><rect x="1" y="24" width="121" height="121" filter="url(#nz)" opacity="0.25"/></g></svg>
<div class="r" style="left:0px;top:152px;width:121px;height:1px;background:#474747;"></div>
<div class="r" style="left:1px;top:158px;width:121px;height:19px;background:#2e2e2e;border-radius:3px;box-sizing:border-box;border:1px solid #4a4a4a"></div>
<div class="t" style="left:6px;top:162px;color:#d0d0d0;font-weight:400;">Volume</div>
<div class="r" style="left:1px;top:180px;width:86px;height:17px;background:#2e2e2e;border-radius:3px 0 0 3px;box-sizing:border-box;border:1px solid #474747"></div>
<div class="r" style="left:88px;top:180px;width:11px;height:17px;background:#5a5a5a;border-radius:0 3px 3px 0"></div>
<svg class="r" style="left:89.2px;top:187px" width="8.6" height="8" viewBox="0 0 8.6 8"><path d="M1 1 L4.3 4.4 L7.6 1" fill="none" stroke="#e8e8e8" stroke-width="1.3"/></svg>
<svg class="r" style="left:101px;top:178px" width="20" height="20" viewBox="0 0 20 20"><circle cx="10" cy="10" r="8.6" fill="none" stroke="#9a9a9a" stroke-width="1.1"/><path d="M6 6 L14 9.5 L11 10.5 L14.5 14 L13.5 15 L10 11.5 L9 14.5 Z" fill="#9a9a9a"/></svg>
<div class="t" style="left:24px;top:203px;color:#f2a260;font-weight:400;">Volume</div>
<div class="t" style="left:24px;top:223px;color:#cfcfcf;font-weight:400;">Advanced</div>
<div class="t" style="left:24px;top:243px;color:#cfcfcf;font-weight:400;">Preview</div>
<div class="r" style="left:62.5px;top:252px;width:2px;height:1px;background:#a8a8a8;"></div>
<div class="r" style="left:69.5px;top:252px;width:2px;height:1px;background:#a8a8a8;"></div>
<div class="r" style="left:77px;top:252px;width:2px;height:1px;background:#a8a8a8;"></div>
<div class="t" style="left:24px;top:263px;color:#cfcfcf;font-weight:400;">Assignment</div>
<div class="t" style="left:136px;top:34px;color:#e8e8e8;font-weight:700;">Volume</div>
<div class="r" style="left:135px;top:58px;width:4px;height:2px;background:#4a4a4a;"></div>
<div class="t" style="left:141px;top:53px;color:#cfcfcf;font-weight:400;">Absorption</div>
<div class="r" style="left:199px;top:58px;width:452px;height:2px;background:#4d4d4d;border-radius:1px"></div>
<div class="t" style="left:658px;top:55px;color:#e0e0e0;font-weight:700;">?</div>
<svg class="r" style="left:135px;top:75px" width="16" height="16" viewBox="0 0 16 16"><circle cx="8" cy="8" r="7.1" fill="#646464"/><circle cx="8" cy="8" r="4.5" fill="#909090" stroke="#242424" stroke-width="1.1"/></svg>
<div class="t" style="left:158px;top:77px;color:#cfcfcf;font-weight:400;">Color</div>
<div class="r" style="left:190px;top:86px;width:2px;height:1px;background:#a8a8a8;"></div>
<div class="r" style="left:197px;top:86px;width:2px;height:1px;background:#a8a8a8;"></div>
<div class="r" style="left:204px;top:86px;width:2px;height:1px;background:#a8a8a8;"></div>
<svg class="r" style="left:216px;top:76.2px" width="7" height="9" viewBox="0 0 7 9"><path d="M1.5 1 L5 4.5 L1.5 8" fill="none" stroke="#8c8c8c" stroke-width="1.2"/></svg>
<div class="r" style="left:225px;top:74px;width:66px;height:15px;background:#7a7a7a;box-shadow:inset 0 0 0 1px #868686,0 0 0 1px #323232"></div>
<svg class="r" style="left:298px;top:71px" width="22" height="20" viewBox="0 0 22 20"><g transform="translate(13 7.6) rotate(45)" fill="#9c9c9c"><rect x="-4.9" y="-1.3" width="9.8" height="2.6"/><rect x="-2.4" y="-5.8" width="4.8" height="5"/><path d="M-2 1 V12 L0 14.1 L2 12 V1" fill="none" stroke="#9c9c9c" stroke-width="1.7" stroke-linejoin="round"/></g></svg>
<div class="t" style="left:158px;top:98px;color:#cfcfcf;font-weight:400;">Texture</div>
<div class="r" style="left:197px;top:107px;width:2px;height:1px;background:#a8a8a8;"></div>
<div class="r" style="left:204px;top:107px;width:2px;height:1px;background:#a8a8a8;"></div>
<div class="r" style="left:211px;top:107px;width:2px;height:1px;background:#a8a8a8;"></div>
<div class="r" style="left:225px;top:94px;width:18px;height:17px;background:#5b5b5b;border-radius:3px;box-shadow:0 0 0 1px #343434"></div>
<svg class="r" style="left:230.1px;top:100.3px" width="8.6" height="8" viewBox="0 0 8.6 8"><path d="M1 1 L4.3 4.3 L7.6 1" fill="none" stroke="#e8e8e8" stroke-width="1.1"/></svg>
<div class="r" style="left:246px;top:94px;width:390px;height:17px;background:#5a5a5a;border-radius:3px;box-shadow:0 0 0 1px #343434"></div>
<div class="r" style="left:639px;top:94px;width:30px;height:17px;background:#5a5a5a;border-radius:3px;box-shadow:0 0 0 1px #343434"></div>
<div class="r" style="left:650.2px;top:105px;width:1.7px;height:2px;background:#d8d8d8;"></div>
<div class="r" style="left:652.8px;top:105px;width:1.7px;height:2px;background:#d8d8d8;"></div>
<div class="r" style="left:655.4px;top:105px;width:1.7px;height:2px;background:#d8d8d8;"></div>
<svg class="r" style="left:135px;top:117px" width="16" height="16" viewBox="0 0 16 16"><circle cx="8" cy="8" r="7.1" fill="#646464"/><circle cx="8" cy="8" r="4.5" fill="#909090" stroke="#242424" stroke-width="1.1"/></svg>
<div class="t" style="left:158px;top:119px;color:#cfcfcf;font-weight:400;">Mix mode</div>
<div class="r" style="left:211px;top:128px;width:2px;height:1px;background:#a8a8a8;"></div>
<div class="r" style="left:225px;top:116px;width:443px;height:17px;background:#5a5a5a;border-radius:3px;box-shadow:0 0 0 1px #343434"></div>
<div class="t" style="left:232px;top:119px;color:#d4d4d4;font-weight:400;">Normal</div>
<svg class="r" style="left:655.0px;top:121.7px" width="9" height="8" viewBox="0 0 9 8"><path d="M1 1 L4.5 4.3 L8 1" fill="none" stroke="#e8e8e8" stroke-width="1.3"/></svg>
<svg class="r" style="left:135px;top:138px" width="16" height="16" viewBox="0 0 16 16"><circle cx="8" cy="8" r="7.1" fill="#646464"/><circle cx="8" cy="8" r="4.5" fill="#909090" stroke="#242424" stroke-width="1.1"/></svg>
<div class="t" style="left:158px;top:140px;color:#cfcfcf;font-weight:400;">Mix strength</div>
<div class="r" style="left:291px;top:137px;width:378px;height:17px;background:#666666;border-radius:0 3px 3px 0;box-shadow:0 0 0 1px #343434"></div>
<div class="r" style="left:481px;top:150px;width:1px;height:4px;background:#7c7c7c;"></div>
<div class="r" style="left:666px;top:137px;width:3px;height:17px;background:#8aaada;border-radius:0 3px 3px 0"></div>
<div class="r" style="left:225px;top:136px;width:67px;height:19px;background:#2c2c2c;border-radius:3px 0 0 3px;box-sizing:border-box;border:1px solid #4a4a4a;border-right:none"></div>
<div class="t" style="left:230px;top:140px;color:#d6d6d6;font-weight:400;">100 %</div>
<svg class="r" style="left:283px;top:140px" width="8" height="12" viewBox="0 0 8 12"><path d="M0.4 3.8 L3.5 0.6 L6.6 3.8 M0.4 7.1 L3.5 10.3 L6.6 7.1" fill="none" stroke="#a4a4a4" stroke-width="1.15"/></svg>
<svg class="r" style="left:135px;top:160px" width="16" height="16" viewBox="0 0 16 16"><circle cx="8" cy="8" r="7.1" fill="#646464"/><circle cx="8" cy="8" r="4.5" fill="#909090" stroke="#242424" stroke-width="1.1"/></svg>
<div class="t" style="left:158px;top:162px;color:#cfcfcf;font-weight:400;letter-spacing:-0.25px;">Distance</div>
<div class="r" style="left:204px;top:171px;width:2px;height:1px;background:#a8a8a8;"></div>
<div class="r" style="left:211px;top:171px;width:2px;height:1px;background:#a8a8a8;"></div>
<div class="r" style="left:291px;top:159px;width:378px;height:17px;background:#666666;border-radius:0 3px 3px 0;box-shadow:0 0 0 1px #343434"></div>
<div class="r" style="left:481px;top:172px;width:1px;height:4px;background:#7c7c7c;"></div>
<div class="r" style="left:658px;top:159px;width:11px;height:17px;background:#8aaada;border-radius:0 3px 3px 0"></div>
<div class="r" style="left:225px;top:158px;width:67px;height:19px;background:#2c2c2c;border-radius:3px 0 0 3px;box-sizing:border-box;border:1px solid #4a4a4a;border-right:none"></div>
<div class="t" style="left:230px;top:162px;color:#d6d6d6;font-weight:400;">4500 cm</div>
<svg class="r" style="left:283px;top:162px" width="8" height="12" viewBox="0 0 8 12"><path d="M0.4 3.8 L3.5 0.6 L6.6 3.8 M0.4 7.1 L3.5 10.3 L6.6 7.1" fill="none" stroke="#a4a4a4" stroke-width="1.15"/></svg>
<div class="r" style="left:135px;top:193px;width:4px;height:2px;background:#4a4a4a;"></div>
<div class="t" style="left:141px;top:188px;color:#cfcfcf;font-weight:400;">Scattering</div>
<div class="r" style="left:194px;top:193px;width:457px;height:2px;background:#4d4d4d;border-radius:1px"></div>
<div class="t" style="left:658px;top:190px;color:#e0e0e0;font-weight:700;">?</div>
<svg class="r" style="left:135px;top:210px" width="16" height="16" viewBox="0 0 16 16"><circle cx="8" cy="8" r="7.1" fill="#646464"/><circle cx="8" cy="8" r="4.5" fill="#909090" stroke="#242424" stroke-width="1.1"/></svg>
<div class="t" style="left:158px;top:212px;color:#cfcfcf;font-weight:400;">Color</div>
<div class="r" style="left:190px;top:221px;width:2px;height:1px;background:#a8a8a8;"></div>
<div class="r" style="left:197px;top:221px;width:2px;height:1px;background:#a8a8a8;"></div>
<div class="r" style="left:204px;top:221px;width:2px;height:1px;background:#a8a8a8;"></div>
<div class="r" style="left:211px;top:221px;width:2px;height:1px;background:#a8a8a8;"></div>
<div class="r" style="left:218px;top:221px;width:2px;height:1px;background:#a8a8a8;"></div>
<div class="r" style="left:225px;top:221px;width:2px;height:1px;background:#a8a8a8;"></div>
<div class="r" style="left:232px;top:221px;width:2px;height:1px;background:#a8a8a8;"></div>
<div class="r" style="left:239px;top:221px;width:2px;height:1px;background:#a8a8a8;"></div>
<svg class="r" style="left:247px;top:211.2px" width="7" height="9" viewBox="0 0 7 9"><path d="M1.5 1 L5 4.5 L1.5 8" fill="none" stroke="#8c8c8c" stroke-width="1.2"/></svg>
<div class="r" style="left:256px;top:209px;width:66px;height:15px;background:#fff1de;"></div>
<svg class="r" style="left:329px;top:206px" width="22" height="20" viewBox="0 0 22 20"><g transform="translate(13 7.6) rotate(45)" fill="#9c9c9c"><rect x="-4.9" y="-1.3" width="9.8" height="2.6"/><rect x="-2.4" y="-5.8" width="4.8" height="5"/><path d="M-2 1 V12 L0 14.1 L2 12 V1" fill="none" stroke="#9c9c9c" stroke-width="1.7" stroke-linejoin="round"/></g></svg>
<div class="t" style="left:158px;top:233px;color:#cfcfcf;font-weight:400;">Texture</div>
<div class="r" style="left:197px;top:242px;width:2px;height:1px;background:#a8a8a8;"></div>
<div class="r" style="left:204px;top:242px;width:2px;height:1px;background:#a8a8a8;"></div>
<div class="r" style="left:211px;top:242px;width:2px;height:1px;background:#a8a8a8;"></div>
<div class="r" style="left:218px;top:242px;width:2px;height:1px;background:#a8a8a8;"></div>
<div class="r" style="left:225px;top:242px;width:2px;height:1px;background:#a8a8a8;"></div>
<div class="r" style="left:232px;top:242px;width:2px;height:1px;background:#a8a8a8;"></div>
<div class="r" style="left:239px;top:242px;width:2px;height:1px;background:#a8a8a8;"></div>
<div class="r" style="left:246px;top:242px;width:2px;height:1px;background:#a8a8a8;"></div>
<div class="r" style="left:256px;top:229px;width:18px;height:17px;background:#5b5b5b;border-radius:3px;box-shadow:0 0 0 1px #343434"></div>
<svg class="r" style="left:261.09999999999997px;top:235.3px" width="8.6" height="8" viewBox="0 0 8.6 8"><path d="M1 1 L4.3 4.3 L7.6 1" fill="none" stroke="#e8e8e8" stroke-width="1.1"/></svg>
<div class="r" style="left:277px;top:229px;width:359px;height:17px;background:#5a5a5a;border-radius:3px;box-shadow:0 0 0 1px #343434"></div>
<div class="r" style="left:639px;top:229px;width:30px;height:17px;background:#5a5a5a;border-radius:3px;box-shadow:0 0 0 1px #343434"></div>
<div class="r" style="left:650.2px;top:240px;width:1.7px;height:2px;background:#d8d8d8;"></div>
<div class="r" style="left:652.8px;top:240px;width:1.7px;height:2px;background:#d8d8d8;"></div>
<div class="r" style="left:655.4px;top:240px;width:1.7px;height:2px;background:#d8d8d8;"></div>
<svg class="r" style="left:135px;top:252px" width="16" height="16" viewBox="0 0 16 16"><circle cx="8" cy="8" r="7.1" fill="#646464"/><circle cx="8" cy="8" r="4.5" fill="#909090" stroke="#242424" stroke-width="1.1"/></svg>
<div class="t" style="left:158px;top:254px;color:#cfcfcf;font-weight:400;">Mix mode</div>
<div class="r" style="left:211px;top:263px;width:2px;height:1px;background:#a8a8a8;"></div>
<div class="r" style="left:218px;top:263px;width:2px;height:1px;background:#a8a8a8;"></div>
<div class="r" style="left:225px;top:263px;width:2px;height:1px;background:#a8a8a8;"></div>
<div class="r" style="left:232px;top:263px;width:2px;height:1px;background:#a8a8a8;"></div>
<div class="r" style="left:239px;top:263px;width:2px;height:1px;background:#a8a8a8;"></div>
<div class="r" style="left:246px;top:263px;width:2px;height:1px;background:#a8a8a8;"></div>
<div class="r" style="left:256px;top:251px;width:412px;height:17px;background:#5a5a5a;border-radius:3px;box-shadow:0 0 0 1px #343434"></div>
<div class="t" style="left:263px;top:254px;color:#d4d4d4;font-weight:400;">Normal</div>
<svg class="r" style="left:655.0px;top:256.7px" width="9" height="8" viewBox="0 0 9 8"><path d="M1 1 L4.5 4.3 L8 1" fill="none" stroke="#e8e8e8" stroke-width="1.3"/></svg>
<svg class="r" style="left:135px;top:273px" width="16" height="16" viewBox="0 0 16 16"><circle cx="8" cy="8" r="7.1" fill="#646464"/><circle cx="8" cy="8" r="4.5" fill="#909090" stroke="#242424" stroke-width="1.1"/></svg>
<div class="t" style="left:158px;top:275px;color:#cfcfcf;font-weight:400;">Mix strength</div>
<div class="r" style="left:225px;top:284px;width:2px;height:1px;background:#a8a8a8;"></div>
<div class="r" style="left:232px;top:284px;width:2px;height:1px;background:#a8a8a8;"></div>
<div class="r" style="left:239px;top:284px;width:2px;height:1px;background:#a8a8a8;"></div>
<div class="r" style="left:246px;top:284px;width:2px;height:1px;background:#a8a8a8;"></div>
<div class="r" style="left:322px;top:272px;width:347px;height:17px;background:#666666;border-radius:0 3px 3px 0;box-shadow:0 0 0 1px #343434"></div>
<div class="r" style="left:496px;top:285px;width:1px;height:4px;background:#7c7c7c;"></div>
<div class="r" style="left:666px;top:272px;width:3px;height:17px;background:#8aaada;border-radius:0 3px 3px 0"></div>
<div class="r" style="left:256px;top:271px;width:67px;height:19px;background:#2c2c2c;border-radius:3px 0 0 3px;box-sizing:border-box;border:1px solid #4a4a4a;border-right:none"></div>
<div class="t" style="left:261px;top:275px;color:#d6d6d6;font-weight:400;">100 %</div>
<svg class="r" style="left:314px;top:275px" width="8" height="12" viewBox="0 0 8 12"><path d="M0.4 3.8 L3.5 0.6 L6.6 3.8 M0.4 7.1 L3.5 10.3 L6.6 7.1" fill="none" stroke="#a4a4a4" stroke-width="1.15"/></svg>
<svg class="r" style="left:135px;top:295px" width="16" height="16" viewBox="0 0 16 16"><circle cx="8" cy="8" r="7.1" fill="#646464"/><circle cx="8" cy="8" r="4.5" fill="#909090" stroke="#242424" stroke-width="1.1"/></svg>
<div class="t" style="left:158px;top:297px;color:#cfcfcf;font-weight:400;">Directionality</div>
<div class="r" style="left:225px;top:306px;width:2px;height:1px;background:#a8a8a8;"></div>
<div class="r" style="left:232px;top:306px;width:2px;height:1px;background:#a8a8a8;"></div>
<div class="r" style="left:239px;top:306px;width:2px;height:1px;background:#a8a8a8;"></div>
<div class="r" style="left:246px;top:306px;width:2px;height:1px;background:#a8a8a8;"></div>
<div class="r" style="left:322px;top:294px;width:347px;height:17px;background:#666666;border-radius:0 3px 3px 0;box-shadow:0 0 0 1px #343434"></div>
<div class="r" style="left:594px;top:294px;width:75px;height:17px;background:#2e2e2e;border-radius:0 3px 3px 0;box-sizing:border-box;border:1px solid #4a4a4a;border-left:none"></div>
<div class="r" style="left:496px;top:307px;width:1px;height:4px;background:#7c7c7c;"></div>
<div class="r" style="left:591px;top:294px;width:3px;height:17px;background:#8aaada;border-radius:0"></div>
<div class="r" style="left:256px;top:293px;width:67px;height:19px;background:#2c2c2c;border-radius:3px 0 0 3px;box-sizing:border-box;border:1px solid #4a4a4a;border-right:none"></div>
<div class="t" style="left:261px;top:297px;color:#d6d6d6;font-weight:400;">0.55</div>
<svg class="r" style="left:314px;top:297px" width="8" height="12" viewBox="0 0 8 12"><path d="M0.4 3.8 L3.5 0.6 L6.6 3.8 M0.4 7.1 L3.5 10.3 L6.6 7.1" fill="none" stroke="#a4a4a4" stroke-width="1.15"/></svg>
<svg class="r" style="left:135px;top:316px" width="16" height="16" viewBox="0 0 16 16"><circle cx="8" cy="8" r="7.1" fill="#646464"/><circle cx="8" cy="8" r="4.5" fill="#909090" stroke="#242424" stroke-width="1.1"/></svg>
<div class="t" style="left:158px;top:318px;color:#cfcfcf;font-weight:400;">Single bounce only</div>
<div class="r" style="left:255px;top:317px;width:13px;height:13px;background:#c4c4c4;border-radius:2px"></div>
<svg class="r" style="left:255px;top:317px" width="13" height="13" viewBox="0 0 13 13"><path d="M2.6 6.5 L4.7 8.5 L10.2 3.6" fill="none" stroke="#111" stroke-width="1.8"/></svg>
<div class="r" style="left:135px;top:348px;width:4px;height:2px;background:#4a4a4a;"></div>
<div class="t" style="left:141px;top:343px;color:#cfcfcf;font-weight:400;">Emission</div>
<div class="r" style="left:188px;top:348px;width:463px;height:2px;background:#4d4d4d;border-radius:1px"></div>
<div class="t" style="left:658px;top:345px;color:#e0e0e0;font-weight:700;">?</div>
<svg class="r" style="left:135px;top:365px" width="16" height="16" viewBox="0 0 16 16"><circle cx="8" cy="8" r="7.1" fill="#646464"/><circle cx="8" cy="8" r="4.5" fill="#909090" stroke="#242424" stroke-width="1.1"/></svg>
<div class="t" style="left:158px;top:367px;color:#cfcfcf;font-weight:400;">Color</div>
<div class="r" style="left:190px;top:376px;width:2px;height:1px;background:#a8a8a8;"></div>
<div class="r" style="left:197px;top:376px;width:2px;height:1px;background:#a8a8a8;"></div>
<div class="r" style="left:204px;top:376px;width:2px;height:1px;background:#a8a8a8;"></div>
<svg class="r" style="left:216px;top:366.2px" width="7" height="9" viewBox="0 0 7 9"><path d="M1.5 1 L5 4.5 L1.5 8" fill="none" stroke="#8c8c8c" stroke-width="1.2"/></svg>
<div class="r" style="left:225px;top:364px;width:66px;height:15px;background:#000000;box-shadow:inset 0 0 0 1px #585858"></div>
<svg class="r" style="left:298px;top:361px" width="22" height="20" viewBox="0 0 22 20"><g transform="translate(13 7.6) rotate(45)" fill="#9c9c9c"><rect x="-4.9" y="-1.3" width="9.8" height="2.6"/><rect x="-2.4" y="-5.8" width="4.8" height="5"/><path d="M-2 1 V12 L0 14.1 L2 12 V1" fill="none" stroke="#9c9c9c" stroke-width="1.7" stroke-linejoin="round"/></g></svg>
<div class="t" style="left:158px;top:388px;color:#cfcfcf;font-weight:400;">Texture</div>
<div class="r" style="left:197px;top:397px;width:2px;height:1px;background:#a8a8a8;"></div>
<div class="r" style="left:204px;top:397px;width:2px;height:1px;background:#a8a8a8;"></div>
<div class="r" style="left:211px;top:397px;width:2px;height:1px;background:#a8a8a8;"></div>
<div class="r" style="left:225px;top:384px;width:18px;height:17px;background:#5b5b5b;border-radius:3px;box-shadow:0 0 0 1px #343434"></div>
<svg class="r" style="left:230.1px;top:390.3px" width="8.6" height="8" viewBox="0 0 8.6 8"><path d="M1 1 L4.3 4.3 L7.6 1" fill="none" stroke="#e8e8e8" stroke-width="1.1"/></svg>
<div class="r" style="left:246px;top:384px;width:390px;height:17px;background:#5a5a5a;border-radius:3px;box-shadow:0 0 0 1px #343434"></div>
<div class="r" style="left:639px;top:384px;width:30px;height:17px;background:#5a5a5a;border-radius:3px;box-shadow:0 0 0 1px #343434"></div>
<div class="r" style="left:650.2px;top:395px;width:1.7px;height:2px;background:#d8d8d8;"></div>
<div class="r" style="left:652.8px;top:395px;width:1.7px;height:2px;background:#d8d8d8;"></div>
<div class="r" style="left:655.4px;top:395px;width:1.7px;height:2px;background:#d8d8d8;"></div>
<svg class="r" style="left:135px;top:407px" width="16" height="16" viewBox="0 0 16 16"><circle cx="8" cy="8" r="7.1" fill="#646464"/><circle cx="8" cy="8" r="4.5" fill="#909090" stroke="#242424" stroke-width="1.1"/></svg>
<div class="t" style="left:158px;top:409px;color:#cfcfcf;font-weight:400;">Mix mode</div>
<div class="r" style="left:211px;top:418px;width:2px;height:1px;background:#a8a8a8;"></div>
<div class="r" style="left:225px;top:406px;width:443px;height:17px;background:#5a5a5a;border-radius:3px;box-shadow:0 0 0 1px #343434"></div>
<div class="t" style="left:232px;top:409px;color:#d4d4d4;font-weight:400;">Normal</div>
<svg class="r" style="left:655.0px;top:411.7px" width="9" height="8" viewBox="0 0 9 8"><path d="M1 1 L4.5 4.3 L8 1" fill="none" stroke="#e8e8e8" stroke-width="1.3"/></svg>
<svg class="r" style="left:135px;top:428px" width="16" height="16" viewBox="0 0 16 16"><circle cx="8" cy="8" r="7.1" fill="#646464"/><circle cx="8" cy="8" r="4.5" fill="#909090" stroke="#242424" stroke-width="1.1"/></svg>
<div class="t" style="left:158px;top:430px;color:#cfcfcf;font-weight:400;">Mix strength</div>
<div class="r" style="left:291px;top:427px;width:378px;height:17px;background:#666666;border-radius:0 3px 3px 0;box-shadow:0 0 0 1px #343434"></div>
<div class="r" style="left:481px;top:440px;width:1px;height:4px;background:#7c7c7c;"></div>
<div class="r" style="left:666px;top:427px;width:3px;height:17px;background:#8aaada;border-radius:0 3px 3px 0"></div>
<div class="r" style="left:225px;top:426px;width:67px;height:19px;background:#2c2c2c;border-radius:3px 0 0 3px;box-sizing:border-box;border:1px solid #4a4a4a;border-right:none"></div>
<div class="t" style="left:230px;top:430px;color:#d6d6d6;font-weight:400;">100 %</div>
<svg class="r" style="left:283px;top:430px" width="8" height="12" viewBox="0 0 8 12"><path d="M0.4 3.8 L3.5 0.6 L6.6 3.8 M0.4 7.1 L3.5 10.3 L6.6 7.1" fill="none" stroke="#a4a4a4" stroke-width="1.15"/></svg>
<svg class="r" style="left:135px;top:450px" width="16" height="16" viewBox="0 0 16 16"><circle cx="8" cy="8" r="7.1" fill="#646464"/><circle cx="8" cy="8" r="4.5" fill="#909090" stroke="#242424" stroke-width="1.1"/></svg>
<div class="t" style="left:158px;top:452px;color:#cfcfcf;font-weight:400;letter-spacing:-0.25px;">Distance</div>
<div class="r" style="left:204px;top:461px;width:2px;height:1px;background:#a8a8a8;"></div>
<div class="r" style="left:211px;top:461px;width:2px;height:1px;background:#a8a8a8;"></div>
<div class="r" style="left:291px;top:449px;width:378px;height:17px;background:#666666;border-radius:0 3px 3px 0;box-shadow:0 0 0 1px #343434"></div>
<div class="r" style="left:481px;top:462px;width:1px;height:4px;background:#7c7c7c;"></div>
<div class="r" style="left:658px;top:449px;width:11px;height:17px;background:#8aaada;border-radius:0 3px 3px 0"></div>
<div class="r" style="left:225px;top:448px;width:67px;height:19px;background:#2c2c2c;border-radius:3px 0 0 3px;box-sizing:border-box;border:1px solid #5c5c5c;border-right:none"></div>
<div class="t" style="left:230px;top:452px;color:#d6d6d6;font-weight:400;">8000 cm</div>
<svg class="r" style="left:283px;top:452px" width="8" height="12" viewBox="0 0 8 12"><path d="M0.4 3.8 L3.5 0.6 L6.6 3.8 M0.4 7.1 L3.5 10.3 L6.6 7.1" fill="none" stroke="#a4a4a4" stroke-width="1.15"/></svg>
<div class="r" style="left:135px;top:483px;width:4px;height:2px;background:#4a4a4a;"></div>
<div class="t" style="left:141px;top:478px;color:#cfcfcf;font-weight:400;">Volume mapping</div>
<div class="r" style="left:229px;top:483px;width:422px;height:2px;background:#4d4d4d;border-radius:1px"></div>
<div class="t" style="left:658px;top:480px;color:#e0e0e0;font-weight:700;">?</div>
<svg class="r" style="left:135px;top:500px" width="16" height="16" viewBox="0 0 16 16"><circle cx="8" cy="8" r="7.1" fill="#646464"/><circle cx="8" cy="8" r="4.5" fill="#909090" stroke="#242424" stroke-width="1.1"/></svg>
<div class="t" style="left:158px;top:502px;color:#cfcfcf;font-weight:400;">Mode</div>
<div class="r" style="left:190px;top:511px;width:2px;height:1px;background:#a8a8a8;"></div>
<div class="r" style="left:197px;top:511px;width:2px;height:1px;background:#a8a8a8;"></div>
<div class="r" style="left:206px;top:499px;width:462px;height:17px;background:#5a5a5a;border-radius:3px;box-shadow:0 0 0 1px #343434"></div>
<div class="t" style="left:213px;top:502px;color:#d4d4d4;font-weight:400;">On surface</div>
<svg class="r" style="left:655.0px;top:504.7px" width="9" height="8" viewBox="0 0 9 8"><path d="M1 1 L4.5 4.3 L8 1" fill="none" stroke="#e8e8e8" stroke-width="1.3"/></svg>
<svg class="r" style="left:135px;top:521px" width="16" height="16" viewBox="0 0 16 16"><circle cx="8" cy="8" r="7.1" fill="#646464"/><circle cx="8" cy="8" r="4.5" fill="#909090" stroke="#242424" stroke-width="1.1"/></svg>
<div class="t" style="left:158px;top:523px;color:#cfcfcf;font-weight:400;letter-spacing:-0.25px;">Step size</div>
<div class="r" style="left:206px;top:519px;width:67px;height:19px;background:#2c2c2c;border-radius:3px;box-sizing:border-box;border:1px solid #4e4e4e"></div>
<div class="t" style="left:211px;top:523px;color:#d6d6d6;font-weight:400;">10 cm</div>
<svg class="r" style="left:264px;top:523px" width="8" height="12" viewBox="0 0 8 12"><path d="M0.4 3.8 L3.5 0.6 L6.6 3.8 M0.4 7.1 L3.5 10.3 L6.6 7.1" fill="none" stroke="#a4a4a4" stroke-width="1.15"/></svg>
</body></html>
